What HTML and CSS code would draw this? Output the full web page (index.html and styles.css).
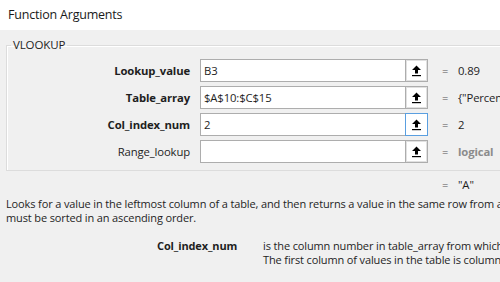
FILE: index.html
```html
<!DOCTYPE html>
<html>

<head>
    <title>Function Arguments</title>
    <meta charset="utf-8">
    <meta name="viewport" content="width=device-width, initial-scale=1">
    <link rel="stylesheet" href="styles.css">
</head>

<body>
<div class="dialog">
    <div class="titlebar">Function Arguments</div>

    <div class="dialog-body">
        <fieldset class="group">
            <legend>VLOOKUP</legend>

            <div class="arg-row">
                <label class="arg-name">Lookup_value</label>
                <input class="arg-input" type="text" value="B3">
                <button class="pick-button"><svg width="11" height="12" viewBox="0 0 11 12"><path d="M5.5 0.5 L1 5 L4 5 L4 8.5 L7 8.5 L7 5 L10 5 Z" fill="#000"/><rect x="1" y="10" width="9" height="1.2" fill="#000"/></svg></button>
                <span class="eq">=</span>
                <span class="arg-value">0.89</span>
            </div>

            <div class="arg-row">
                <label class="arg-name">Table_array</label>
                <input class="arg-input" type="text" value="$A$10:$C$15">
                <button class="pick-button"><svg width="11" height="12" viewBox="0 0 11 12"><path d="M5.5 0.5 L1 5 L4 5 L4 8.5 L7 8.5 L7 5 L10 5 Z" fill="#000"/><rect x="1" y="10" width="9" height="1.2" fill="#000"/></svg></button>
                <span class="eq">=</span>
                <span class="arg-value">{"Percent",</span>
            </div>

            <div class="arg-row">
                <label class="arg-name">Col_index_num</label>
                <input class="arg-input" type="text" value="2">
                <button class="pick-button pick-focus"><svg width="11" height="12" viewBox="0 0 11 12"><path d="M5.5 0.5 L1 5 L4 5 L4 8.5 L7 8.5 L7 5 L10 5 Z" fill="#000"/><rect x="1" y="10" width="9" height="1.2" fill="#000"/></svg></button>
                <span class="eq">=</span>
                <span class="arg-value">2</span>
            </div>

            <div class="arg-row">
                <label class="arg-name optional">Range_lookup</label>
                <input class="arg-input" type="text" value="">
                <button class="pick-button"><svg width="11" height="12" viewBox="0 0 11 12"><path d="M5.5 0.5 L1 5 L4 5 L4 8.5 L7 8.5 L7 5 L10 5 Z" fill="#000"/><rect x="1" y="10" width="9" height="1.2" fill="#000"/></svg></button>
                <span class="eq">=</span>
                <span class="arg-value hint">logical</span>
            </div>
        </fieldset>

        <div class="result">
            <span class="eq">=</span>
            <span class="arg-value">"A"</span>
        </div>

        <p class="description">Looks for a value in the leftmost column of a table, and then returns a value in the same row from a column you specify. By default, the table<br>must be sorted in an ascending order.</p>

        <div class="arg-help">
            <div class="help-name">Col_index_num</div>
            <div class="help-text">is the column number in table_array from which the matching value should be returned.<br>The first column of values in the table is column 1.</div>
        </div>
    </div>
</div>
</body>

</html>
```

FILE: styles.css
```css
body {
    margin: 0;
    width: 500px;
    height: 282px;
    overflow: hidden;
    font-family: "Open Sans", "Noto Sans", sans-serif;
    font-size: 11px;
    letter-spacing: -0.13px;
    color: #1e1e1e;
    background-color: #F0F0F0;
}

.dialog {
    width: 640px;
}

.titlebar {
    height: 30px;
    line-height: 30px;
    padding-left: 8px;
    font-size: 12.5px;
    letter-spacing: -0.2px;
    background-color: #FFFFFF;
    color: #1a1a1a;
}

.dialog-body {
    background-color: #F0F0F0;
    padding: 7px 0 0 6px;
    height: 245px;
}

.group {
    margin: 0;
    padding: 6px 0 7px 0;
    border: 1px solid #DCDCDC;
    box-shadow: inset 1px 1px 0 #FFFFFF;
}

.group legend {
    margin-left: 4px;
    padding: 0 2px;
    font-size: 11.5px;
    line-height: 16px;
}

.arg-row {
    display: flex;
    align-items: center;
    height: 23px;
    margin-bottom: 4px;
}

.arg-row:last-child {
    margin-bottom: 0;
}

.arg-name {
    width: 183px;
    text-align: right;
    font-size: 11.3px;
    font-weight: bold;
    margin-right: 10px;
}

.arg-name.optional {
    font-weight: normal;
}

.arg-input {
    box-sizing: border-box;
    width: 205px;
    height: 23px;
    margin: 0;
    padding: 0 3px;
    border: 1px solid #ADADAD;
    border-right: none;
    font-family: inherit;
    font-size: 11.3px;
    letter-spacing: inherit;
    color: #1e1e1e;
    background-color: #FFFFFF;
    outline: none;
}

.pick-button {
    box-sizing: border-box;
    width: 23px;
    height: 23px;
    margin: 0;
    padding: 0;
    border: 1px solid #ADADAD;
    box-shadow: inset 0 0 0 1px #E1E1E1;
    background-color: #FFFFFF;
    display: flex;
    align-items: center;
    justify-content: center;
}

.pick-focus {
    border-color: #5A9FE0;
    box-shadow: none;
}

.eq {
    margin-left: 14px;
    width: 16px;
    color: #555555;
}

.arg-value {
    white-space: nowrap;
    font-size: 11.3px;
}

.hint {
    color: #8C8C8C;
    font-weight: bold;
}

.result {
    display: flex;
    margin-top: 6px;
    padding-left: 422px;
    line-height: 16px;
}

.description {
    margin: 4px 0 0 0;
    line-height: 13.5px;
    white-space: nowrap;
}

.arg-help {
    display: flex;
    margin-top: 15px;
    line-height: 14px;
}

.help-name {
    flex: none;
    box-sizing: border-box;
    width: 257px;
    padding-left: 151px;
    font-weight: bold;
}

.help-text {
    white-space: nowrap;
}
```
